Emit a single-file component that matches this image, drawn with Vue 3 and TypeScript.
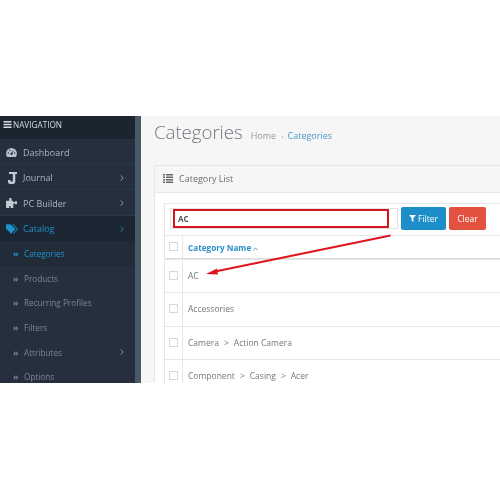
<script setup lang="ts">
interface NavItem { label: string; icon: string; arrow?: boolean; active?: boolean }
const nav: NavItem[] = [
  { label: 'Dashboard', icon: 'dash' },
  { label: 'Journal', icon: 'j', arrow: true },
  { label: 'PC Builder', icon: 'puzzle', arrow: true },
  { label: 'Catalog', icon: 'tag', arrow: true, active: true },
]
const subs = [
  { label: 'Categories', active: true },
  { label: 'Products' },
  { label: 'Recurring Profiles' },
  { label: 'Filters' },
  { label: 'Attributes', arrow: true },
  { label: 'Options' },
]
const rows = [['AC'], ['Accessories'], ['Camera', 'Action Camera'], ['Component', 'Casing', 'Acer']]
</script>

<template>
  <div class="page">
    <div class="frame">
      <aside class="side">
        <div class="nav-head">
          <svg class="burger" viewBox="0 0 8 7" width="9" height="7"><path d="M0 0h8v1.400H0zM0 2.800h8v1.400H0zM0 5.600h8V7H0z" fill="#d5dbe0"/></svg>
          <span>NAVIGATION</span>
        </div>
        <div v-for="n in nav" :key="n.label" class="nav-item" :class="{ active: n.active }">
          <span class="ico">
            <svg v-if="n.icon === 'dash'" viewBox="0 0 12 10" width="11" height="9"><path d="M6 0a6 6 0 0 0-6 6c0 1.500.5 2.800 1.300 4h9.400C11.500 8.800 12 7.500 12 6a6 6 0 0 0-6-6z" fill="#b9c2ca"/><circle cx="6" cy="6.500" r="1.300" fill="#26313e"/><path d="M6 6.500 8 3" stroke="#26313e" stroke-width="1"/><circle cx="2.500" cy="5.500" r=".8" fill="#26313e"/><circle cx="9.500" cy="5.500" r=".8" fill="#26313e"/><circle cx="4.200" cy="2.500" r=".8" fill="#26313e"/></svg>
            <svg v-else-if="n.icon === 'j'" class="j-ico" viewBox="0 0 9 12" width="9" height="12"><path d="M1 0h8v2H7.300v7.500C7.300 11 6.300 12 4.800 12H2C.8 12 0 11 0 9.800V8h2.500v1.500h2.300V2H1z" fill="#c3cbd2"/></svg>
            <svg v-else-if="n.icon === 'puzzle'" viewBox="0 0 12 11" width="11" height="10"><path d="M3.500 0h2.500v3h1.800v1.500H10V3.600h2v3.200h-2V6H8v5H5V8.800H3.500V11H0V3h3.500z" fill="#c3cbd2"/></svg>
            <svg v-else viewBox="0 0 14 11" width="12" height="10"><path d="M0 0h5l6 5.500L6 11 0 5zM7 0h1.500L14 5.500 9 11H7.800l5-5.500z" fill="#1e91cf"/></svg>
          </span>
          <span class="lbl">{{ n.label }}</span>
          <svg v-if="n.arrow" class="chev" viewBox="0 0 4 6" width="4" height="6"><path d="M.6.5 3.200 3 .6 5.500" fill="none" stroke="currentColor" stroke-width="1"/></svg>
        </div>
        <div v-for="s in subs" :key="s.label" class="sub-item" :class="{ active: s.active }">
          <span class="dbl">»</span>
          <span class="lbl">{{ s.label }}</span>
          <svg v-if="s.arrow" class="chev" viewBox="0 0 4 6" width="4" height="6"><path d="M.6.5 3.200 3 .6 5.500" fill="none" stroke="currentColor" stroke-width="1"/></svg>
        </div>
      </aside>
      <main class="main">
        <header class="title">
          <h1>Categories</h1>
          <span class="crumb">Home</span>
          <span class="sep">›</span>
          <span class="crumb link">Categories</span>
        </header>
        <section class="panel">
          <div class="panel-head">
            <svg viewBox="0 0 10 9" width="10" height="9"><path d="M0 0h2v1.500H0zM3 0h7v1.500H3zM0 2.500h2V4H0zM3 2.500h7V4H3zM0 5h2v1.500H0zM3 5h7v1.500H3zM0 7.500h2V9H0zM3 7.500h7V9H3z" fill="#666"/></svg>
            <span>Category List</span>
          </div>
          <div class="panel-body">
            <div class="table">
              <div class="filter">
                <div class="input">AC</div>
                <button class="btn blue">
                  <svg viewBox="0 0 8 8" width="7" height="7"><path d="M0 0h8L5 3.500V8L3 6.500v-3z" fill="#fff"/></svg>
                  Filter
                </button>
                <button class="btn red">Clear</button>
              </div>
              <div class="row head">
                <div class="cb-cell"><i class="cb"></i></div>
                <div class="name">
                  Category Name
                  <svg viewBox="0 0 6 4" width="5" height="4"><path d="M.5 3.300 3 .8l2.500 2.500" fill="none" stroke="#1e91cf" stroke-width="1"/></svg>
                </div>
              </div>
              <div v-for="r in rows" :key="r.join()" class="row">
                <div class="cb-cell"><i class="cb"></i></div>
                <div class="name plain">
                  <template v-for="(p, i) in r" :key="p">
                    <span v-if="i" class="gt">&gt;</span>{{ p }}
                  </template>
                </div>
              </div>
            </div>
          </div>
        </section>
      </main>
      <div class="redbox"></div>
      <svg class="arrow" viewBox="0 116 500 267" width="500" height="267">
        <path d="M390.500 235.500 215 271.500" stroke="#e0141c" stroke-width="2" fill="none"/>
        <path d="M206 274 217 268.500 218 274.500z" fill="#e0141c"/>
      </svg>
    </div>
  </div>
</template>

<style>
html, body { margin: 0; background: #fff; }
</style>

<style scoped>
.page {
  width: 500px;
  height: 500px;
  padding-top: 116px;
  box-sizing: border-box;
  overflow: hidden;
  font-family: "Open Sans", "Noto Sans", sans-serif;
  background: #fff;
}
.frame {
  position: relative;
  height: 267px;
  display: flex;
  overflow: hidden;
  filter: blur(0.35px);
}
.side {
  width: 141px;
  flex: none;
  background: #252f3d;
  border-right: 6px solid #4a5867;
  box-sizing: border-box;
  overflow: hidden;
}
.nav-head {
  height: 23px;
  background: #1b2530;
  color: #d5dbe0;
  font-size: 8.200px;
  display: flex;
  align-items: center;
  gap: 1px;
  padding: 0 0 7px 3px;
  box-sizing: border-box;
}
.nav-item {
  height: 25.500px;
  display: flex;
  align-items: center;
  color: #aeb6bd;
  font-size: 9px;
  padding-top: 1.500px;
  border-bottom: 1px solid #2c3745;
  box-sizing: border-box;
}
.nav-item.active { background: #1c2632; color: #1e91cf; border-bottom-color: #1c2632; }
.ico {
  width: 23px;
  padding-left: 6px;
  box-sizing: border-box;
  flex: none;
  display: flex;
}
.j-ico { margin-left: 2px; }
.chev { margin-left: auto; margin-right: 11px; color: #8d97a1; flex: none; }
.active .chev { color: #1e80b5; }
.sub-item {
  height: 24.700px;
  display: flex;
  align-items: center;
  color: #7c8792;
  font-size: 8.200px;
  box-sizing: border-box;
}
.sub-item.active { background: #222c39; color: #1e91cf; }
.dbl { width: 24px; padding-left: 13px; box-sizing: border-box; flex: none; font-size: 9px; font-weight: 700; }
.main {
  flex: 1;
  min-width: 0;
  background: #f6f6f6;
  padding-left: 13px;
}
.title {
  height: 49px;
  display: flex;
  align-items: center;
  padding-bottom: 17px;
  box-sizing: border-box;
  color: #8a9096;
  font-size: 9px;
}
h1 {
  margin: 0 8px 0 0;
  font-size: 18.600px;
  font-weight: 300;
  color: #6f767d;
  line-height: 1;
}
.crumb { margin-top: 6px; color: #9a9a9a; }
.crumb.link { color: #4b97c6; }
.sep { margin: 6px 4px 0 5px; font-size: 8px; color: #aaa; }
.panel {
  width: 360px;
  height: 300px;
  border: 1px solid #e6e6e6;
  border-right: 0;
  background: #fff;
  box-sizing: border-box;
}
.panel-head {
  height: 27px;
  background: #f6f6f6;
  border-bottom: 1px solid #e8e8e8;
  display: flex;
  align-items: center;
  gap: 6px;
  padding: 0 0 2px 8px;
  box-sizing: border-box;
  font-size: 9px;
  color: #6c6c6c;
}
.panel-body { padding: 10px 0 0 9px; }
.table { border: 1px solid #e6e6e6; border-right: 0; }
.filter {
  height: 31px;
  display: flex;
  align-items: center;
  gap: 3px;
  padding: 0 0 2px 5px;
  box-sizing: border-box;
}
.input {
  width: 228px;
  height: 21px;
  border: 1px solid #e3e3e3;
  box-sizing: border-box;
  font-size: 8px;
  font-weight: 700;
  color: #555;
  padding-left: 7px;
  line-height: 19px;
}
.btn {
  height: 23px;
  border: 0;
  border-radius: 2px;
  color: #fff;
  font: 8.500px "Open Sans", sans-serif;
  padding: 0;
  display: flex;
  align-items: center;
  justify-content: center;
  gap: 2px;
}
.blue { width: 45px; background: #1e8ec9; }
.red { width: 37px; background: #e35240; }
.row {
  height: 33.300px;
  display: flex;
  border-top: 1px solid #e6e6e6;
  box-sizing: border-box;
}
.row.head { height: 24px; border-bottom: 1px solid #dcdcdc; }
.cb-cell {
  width: 18px;
  flex: none;
  border-right: 1px solid #e6e6e6;
  padding: 11px 0 0 4px;
  box-sizing: border-box;
}
.row.head .cb-cell { padding-top: 6px; }
.cb {
  display: block;
  width: 9px;
  height: 9px;
  border: 1px solid #d8d8d8;
  box-sizing: border-box;
  background: #fff;
}
.name {
  padding: 0 0 0 5px;
  font-size: 8.200px;
  font-weight: 700;
  color: #2f8fc8;
  line-height: 23px;
}
.name.plain {
  font-weight: 400;
  font-size: 8.500px;
  color: #777;
  line-height: 32px;
}
.gt { margin: 0 5px; }
.redbox {
  position: absolute;
  left: 173px;
  top: 93px;
  width: 216px;
  height: 19px;
  box-sizing: border-box;
  border: 2px solid #d5141c;
}
.arrow { position: absolute; left: 0; top: 0; }
</style>
